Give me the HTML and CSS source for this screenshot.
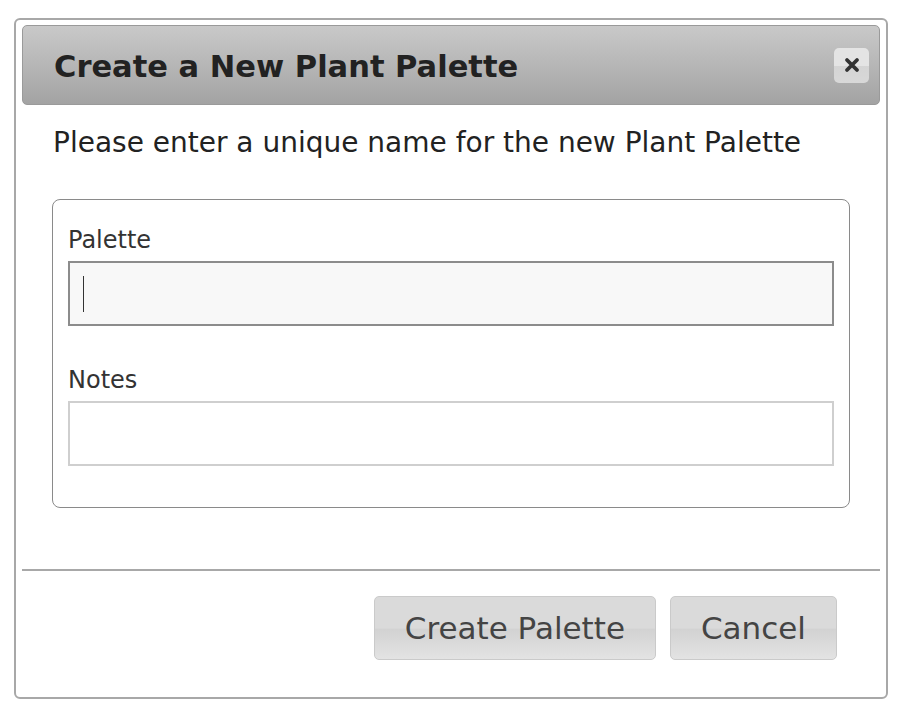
FILE: index.html
```html
<!DOCTYPE html>
<html lang="en">
  <head>
    <meta charset="utf-8" />
    <title>Create a New Plant Palette</title>
    <link rel="stylesheet" href="styles.css">
  </head>
  <body>
    <div class="dialog">
      <div class="dialog-header">
        <span class="dialog-title">Create a New Plant Palette</span>
        <button class="close-btn" title="Close">
          <svg width="16" height="16" viewBox="0 0 16 16">
            <path d="M3 3 L13 13 M13 3 L3 13" stroke="#333" stroke-width="3.8" stroke-linecap="round" />
          </svg>
        </button>
      </div>
      <p class="intro">Please enter a unique name for the new Plant Palette</p>
      <div class="field-box">
        <label class="field-label" for="palette">Palette</label>
        <div class="field-input active" id="palette"><span class="caret"></span></div>
        <label class="field-label" for="notes">Notes</label>
        <div class="field-input" id="notes"></div>
      </div>
      <div class="dialog-footer">
        <button class="btn">Create Palette</button>
        <button class="btn">Cancel</button>
      </div>
    </div>
  </body>
</html>
```

FILE: styles.css
```css
body {
  margin: 0;
  background-color: #fff;
  font-family: "DejaVu Sans", Verdana, sans-serif;
  color: #222;
}

.dialog {
  box-sizing: border-box;
  margin: 18px 0 0 14px;
  width: 874px;
  height: 681px;
  border: 2px solid #a8a8a8;
  border-radius: 6px;
  padding: 5px 6px;
}

.dialog-header {
  display: flex;
  align-items: center;
  justify-content: space-between;
  box-sizing: border-box;
  height: 80px;
  padding: 0 10px 0 31px;
  border: 1px solid #9a9a9a;
  border-radius: 5px;
  background: linear-gradient(#c9c9c9, #a3a3a3);
}

.dialog-title {
  font-size: 30.5px;
  font-weight: bold;
  color: #222;
  padding-top: 2px;
}

.close-btn {
  display: flex;
  align-items: center;
  justify-content: center;
  width: 35px;
  height: 35px;
  padding: 0;
  border: 0;
  border-radius: 5px;
  background: linear-gradient(#e4e4e4 0%, #e4e4e4 50%, #d4d4d4 50%, #d8d8d8 100%);
}

.intro {
  margin: 21px 0 0 31px;
  font-size: 28px;
  color: #222;
}

.field-box {
  box-sizing: border-box;
  margin: 40px 0 0 30px;
  width: 798px;
  height: 309px;
  border: 1px solid #8a8a8a;
  border-radius: 8px;
  padding: 26px 15px 0 15px;
}

.field-label {
  display: block;
  font-size: 24px;
  color: #333;
}

.field-input {
  box-sizing: border-box;
  height: 65px;
  margin: 7px 0 40px 0;
  border: 2px solid #cfcfcf;
  background-color: #fff;
  display: flex;
  align-items: center;
  padding-left: 13px;
}

.field-input.active {
  border-color: #8c8c8c;
  background-color: #f8f8f8;
}

.caret {
  display: block;
  width: 1px;
  height: 36px;
  background-color: #333;
}

.dialog-footer {
  display: flex;
  justify-content: flex-end;
  gap: 14px;
  margin-top: 61px;
  border-top: 2px solid #a8a8a8;
  padding: 25px 43px 0 0;
}

.btn {
  height: 64px;
  padding: 0 30px;
  border: 1px solid #cacaca;
  border-radius: 5px;
  background: linear-gradient(#dadada 0%, #dadada 50%, #d2d2d2 52%, #e3e3e3 100%);
  font-family: "DejaVu Sans", Verdana, sans-serif;
  font-size: 31px;
  color: #444;
}
```
